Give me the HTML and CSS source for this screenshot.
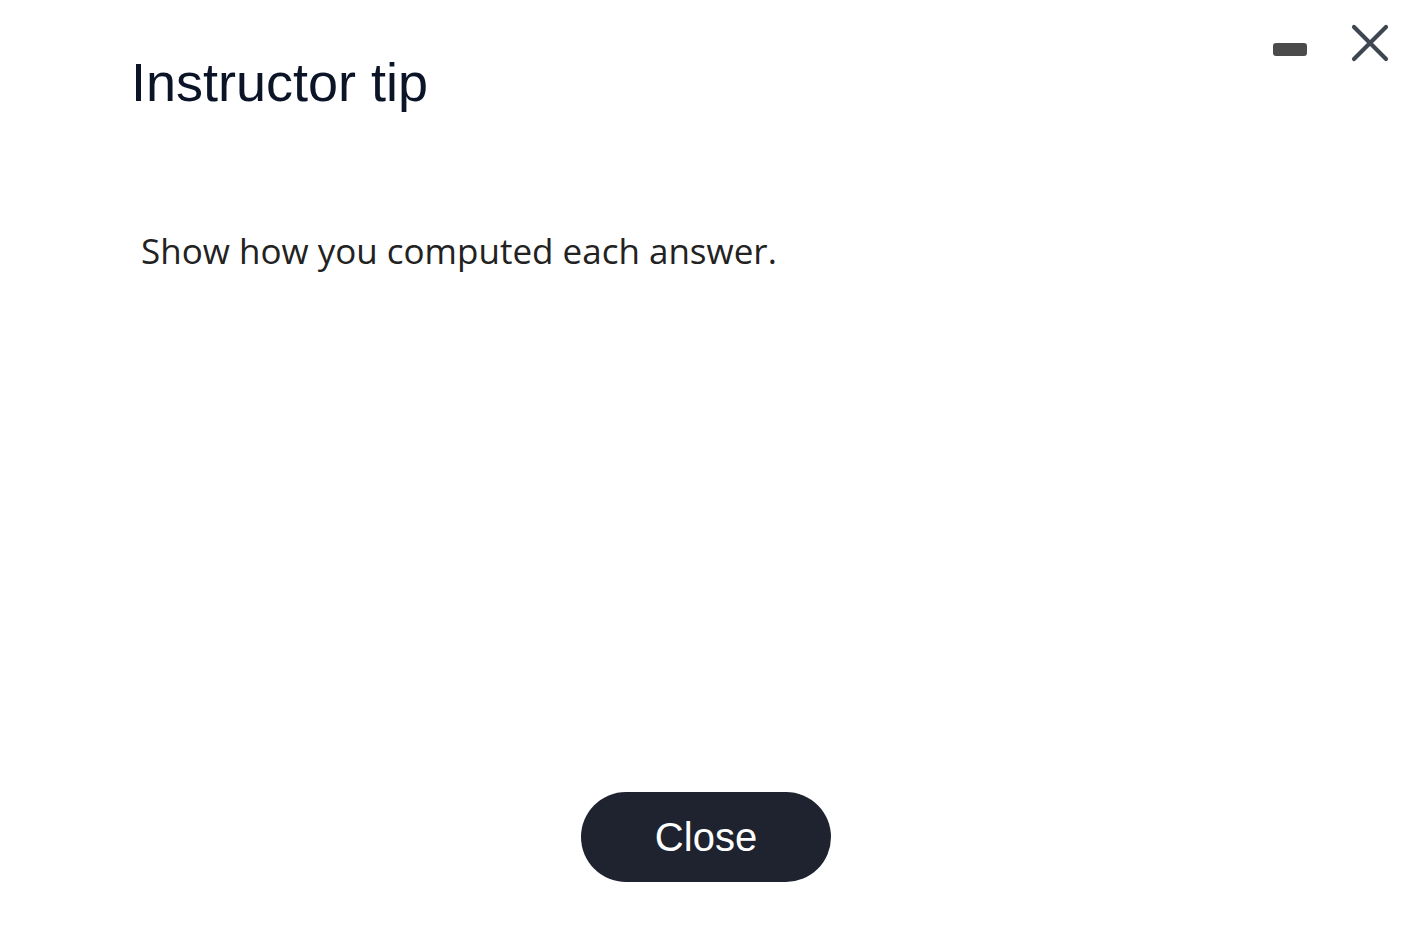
FILE: index.html
```html
<!DOCTYPE html>
<html lang="en">
<head>
<meta charset="utf-8">
<title>Instructor tip</title>
<link rel="stylesheet" href="styles.css">
</head>
<body>
<div class="dialog">
  <header class="dialog-header">
    <h1 class="dialog-title">Instructor tip</h1>
    <div class="window-controls">
      <button class="ctrl ctrl-min" aria-label="Minimize">
        <svg width="36" height="14" viewBox="0 0 36 14"><rect x="1" y="1" width="34" height="13" rx="3" fill="#4b4b4b"/></svg>
      </button>
      <button class="ctrl ctrl-close" aria-label="Close">
        <svg width="38" height="38" viewBox="0 0 38 38"><path d="M3 3 L35 35 M35 3 L3 35" stroke="#3e4652" stroke-width="4.2" stroke-linecap="round" fill="none"/></svg>
      </button>
    </div>
  </header>
  <main class="dialog-body">
    <p class="tip-text">Show how you computed each answer.</p>
  </main>
  <footer class="dialog-footer">
    <button class="close-btn">Close</button>
  </footer>
</div>
</body>
</html>
```
FILE: styles.css
```css
html, body {
  margin: 0;
  padding: 0;
  background: #ffffff;
}
.dialog {
  width: 1405px;
  height: 932px;
  display: flex;
  flex-direction: column;
  box-sizing: border-box;
}
.dialog-header {
  display: flex;
  justify-content: space-between;
  align-items: flex-start;
  padding: 0 16px 0 131px;
}
.dialog-title {
  margin: 50px 0 0 0;
  font-family: "Liberation Sans", Arial, sans-serif;
  font-weight: 400;
  font-size: 54px;
  line-height: 64px;
  color: #0c1428;
}
.window-controls {
  display: flex;
  align-items: flex-start;
  gap: 43px;
  padding-top: 24px;
}
.ctrl {
  border: 0;
  background: none;
  padding: 0;
  margin: 0;
  display: block;
  cursor: pointer;
}
.ctrl svg { display: block; }
.ctrl-min { margin-top: 18px; }
.dialog-body {
  flex: 1;
  padding: 0 0 0 141px;
}
.tip-text {
  margin: 113px 0 0 0;
  font-family: "Open Sans", sans-serif;
  font-size: 35px;
  line-height: 48px;
  color: #222222;
}
.dialog-footer {
  display: flex;
  justify-content: center;
  padding: 0 0 50px 7px;
}
.close-btn {
  width: 250px;
  height: 90px;
  border: 0;
  border-radius: 45px;
  background: #1f2330;
  color: #ffffff;
  font-family: "Liberation Sans", Arial, sans-serif;
  font-size: 40px;
  padding: 0;
}
```
